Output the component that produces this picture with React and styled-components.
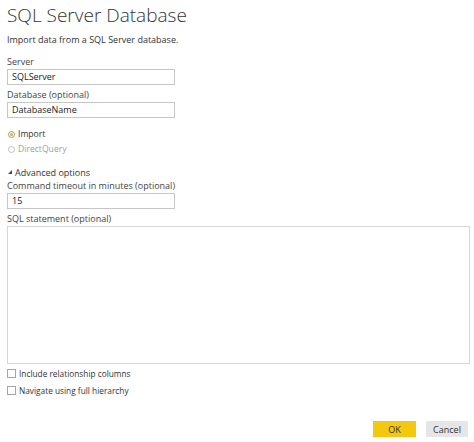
import React from "react";
import styled, { createGlobalStyle } from "styled-components";

const Global = createGlobalStyle`
  html, body { margin: 0; padding: 0; background: #fff; }
  body { font-family: "Open Sans", "Noto Sans", sans-serif; color: #333; }
  * { box-sizing: border-box; }
`;

const Page = styled.div`
  width: 474px;
  height: 442px;
  padding: 0 5px 0 7px;
  display: flex;
  flex-direction: column;
`;

const Title = styled.h1`
  margin: 2px 0 0 0;
  font-size: 19px;
  line-height: 26px;
  font-weight: 300;
  color: #333;
`;

const Subtitle = styled.p`
  margin: 5px 0 0 0;
  font-size: 9px;
  line-height: 14px;
  color: #333;
`;

const Label = styled.label`
  display: block;
  margin-top: ${(p) => p.$mt || 0}px;
  font-size: 9px;
  line-height: 12px;
  color: #444;
`;

const TextInput = styled.div`
  width: 168px;
  height: 16px;
  margin-top: 1px;
  border: 1px solid #c6c6c6;
  padding: 0 4px;
  font-size: 9px;
  line-height: 14px;
  color: #222;
`;

const RadioGroup = styled.div`
  margin-top: 9px;
  display: flex;
  flex-direction: column;
  gap: 1px;
`;

const RadioRow = styled.div`
  display: flex;
  align-items: center;
  gap: 3px;
  height: 14px;
  font-size: 8.6px;
  color: ${(p) => (p.$disabled ? "#a0a0a0" : "#333")};
`;

const RadioDot = styled.span`
  width: 7px;
  height: 7px;
  border-radius: 50%;
  border: 1px solid ${(p) => (p.$checked ? "#999" : "#c0c0c0")};
  display: flex;
  align-items: center;
  justify-content: center;
  margin-left: 1px;
  &::after {
    content: "";
    width: 3px;
    height: 3px;
    border-radius: 50%;
    background: ${(p) => (p.$checked ? "#e8b400" : "transparent")};
  }
`;

const Expander = styled.div`
  margin-top: 9px;
  display: flex;
  align-items: center;
  gap: 3px;
  height: 14px;
  font-size: 9px;
  color: #333;
`;

const Triangle = styled.span`
  width: 0;
  height: 0;
  margin-left: 1px;
  border-left: 4px solid transparent;
  border-bottom: 4px solid #444;
`;

const TextArea = styled.div`
  width: 463px;
  height: 138px;
  margin-top: 1px;
  border: 1px solid #d6d6d6;
`;

const Checks = styled.div`
  margin-top: 2px;
  display: flex;
  flex-direction: column;
  gap: 3px;
`;

const CheckRow = styled.div`
  display: flex;
  align-items: center;
  gap: 3px;
  height: 14px;
  font-size: 8.3px;
  color: #333;
`;

const Box = styled.span`
  width: 9px;
  height: 9px;
  border: 1px solid #a6a6a6;
  background: #fff;
`;

const Footer = styled.div`
  margin-top: auto;
  margin-bottom: 5px;
  display: flex;
  justify-content: flex-end;
  gap: 10px;
  padding-right: 1px;
`;

const Button = styled.button`
  width: ${(p) => p.$w || 43}px;
  height: 16px;
  border: none;
  padding: 0;
  font-family: inherit;
  font-size: 9px;
  color: #333;
  background: ${(p) => (p.$primary ? "#f2c811" : "#e6e6e6")};
`;

export default function App() {
  return (
    <>
      <Global />
      <Page>
        <Title>SQL Server Database</Title>
        <Subtitle>Import data from a SQL Server database.</Subtitle>
        <Label $mt={9}>Server</Label>
        <TextInput>SQLServer</TextInput>
        <Label $mt={4}>Database (optional)</Label>
        <TextInput>DatabaseName</TextInput>
        <RadioGroup>
          <RadioRow>
            <RadioDot $checked />
            Import
          </RadioRow>
          <RadioRow $disabled>
            <RadioDot />
            DirectQuery
          </RadioRow>
        </RadioGroup>
        <Expander>
          <Triangle />
          Advanced options
        </Expander>
        <Label $mt={1}>Command timeout in minutes (optional)</Label>
        <TextInput>15</TextInput>
        <Label $mt={4}>SQL statement (optional)</Label>
        <TextArea />
        <Checks>
          <CheckRow>
            <Box />
            Include relationship columns
          </CheckRow>
          <CheckRow>
            <Box />
            Navigate using full hierarchy
          </CheckRow>
        </Checks>
        <Footer>
          <Button $primary $w={43}>OK</Button>
          <Button $w={42}>Cancel</Button>
        </Footer>
      </Page>
    </>
  );
}
